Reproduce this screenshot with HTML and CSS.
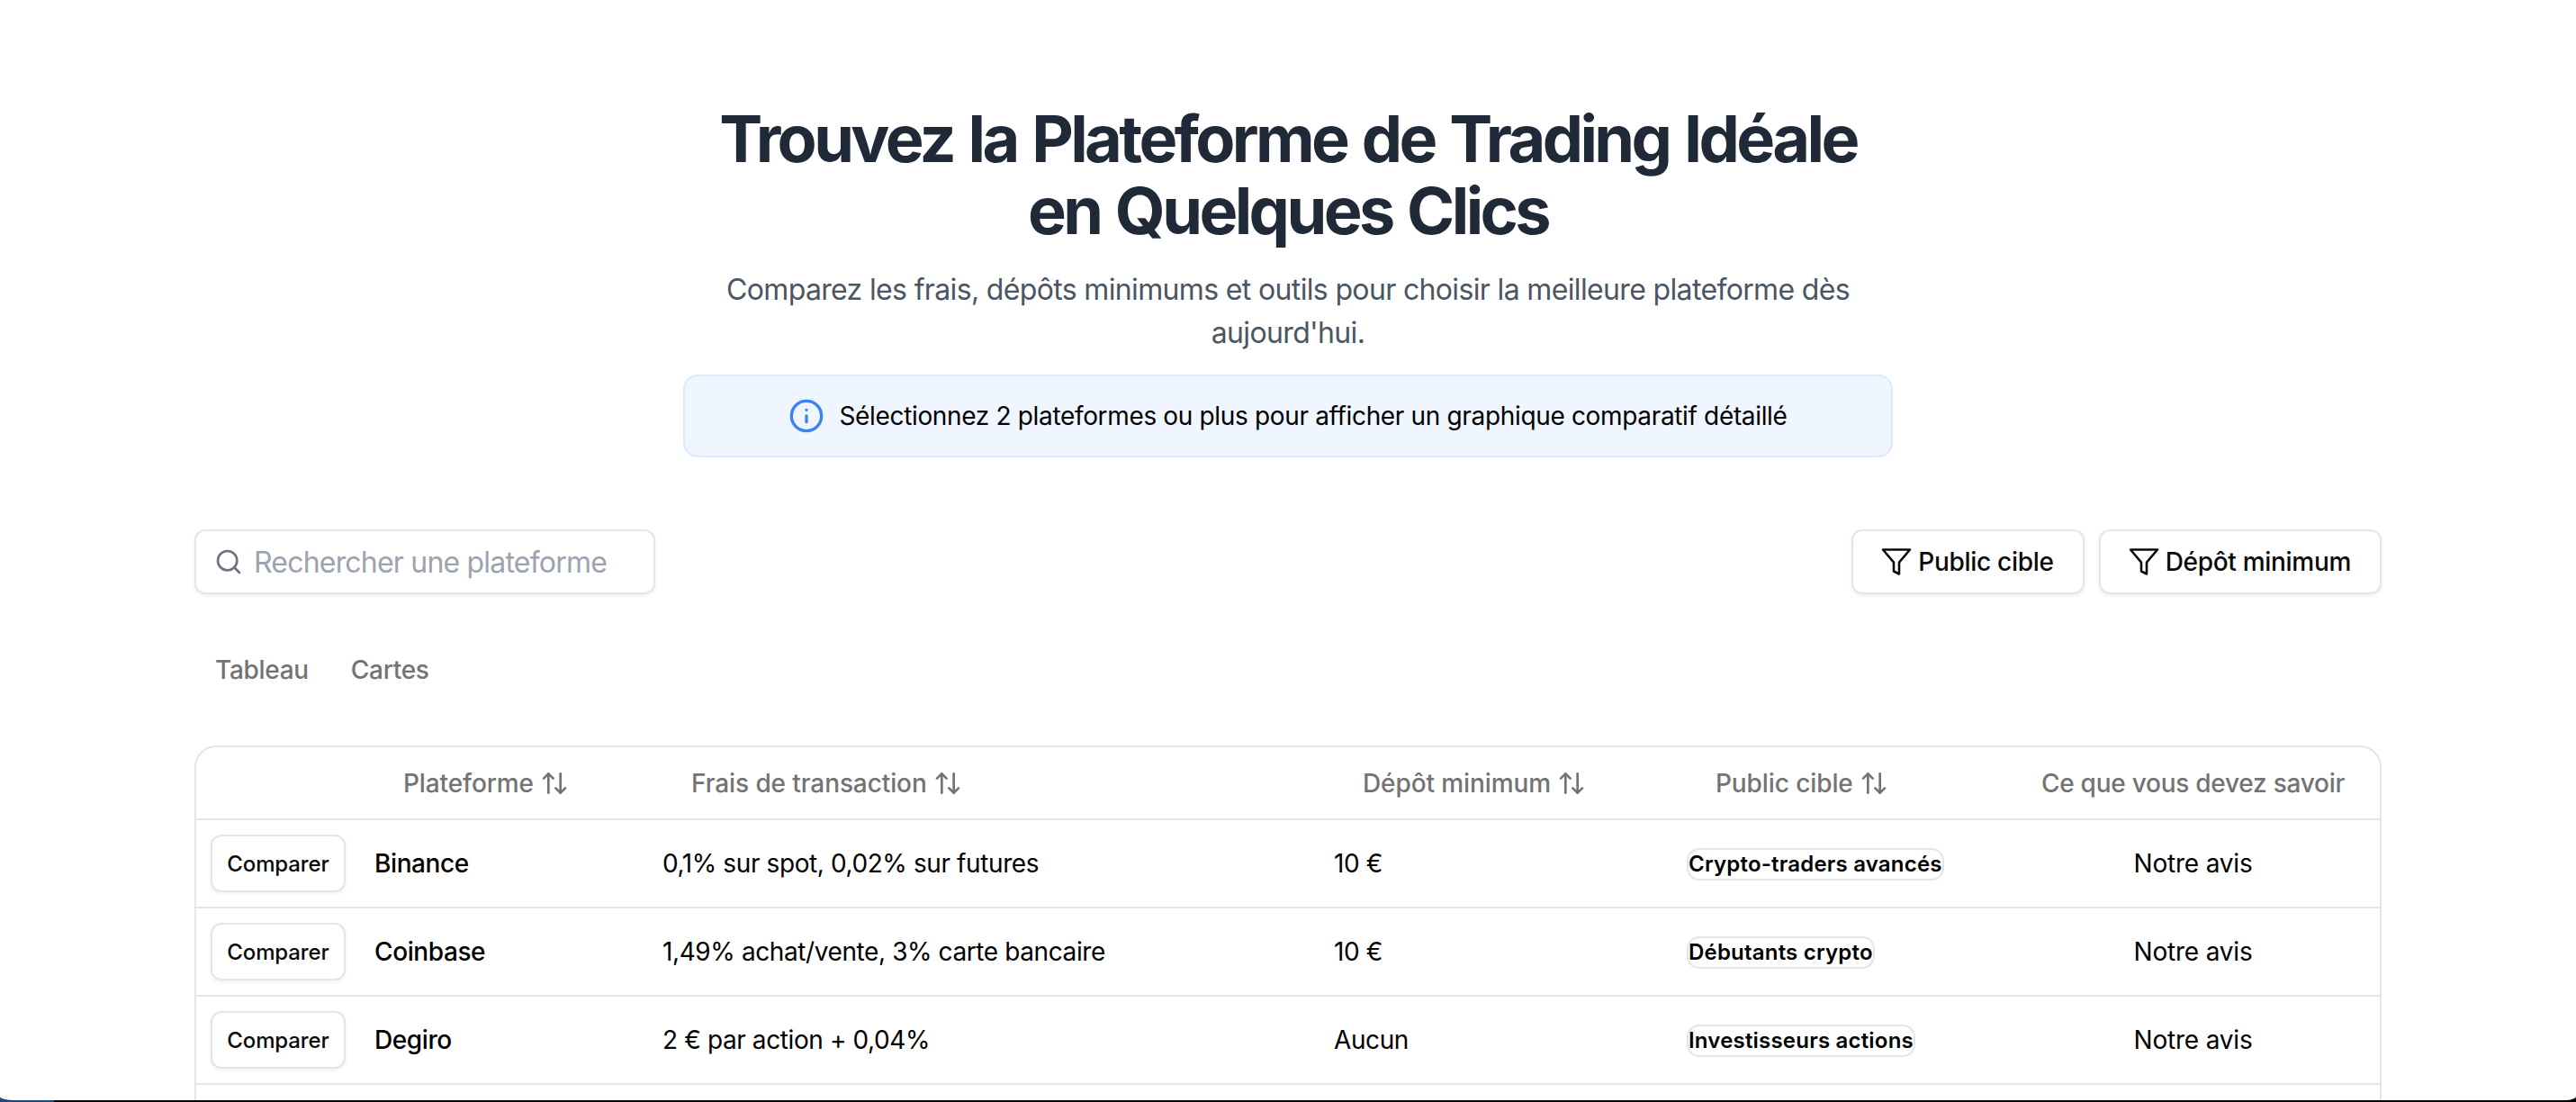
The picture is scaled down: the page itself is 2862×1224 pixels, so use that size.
FILE: index.html
```html
<!DOCTYPE html>
<html lang="fr">
<head>
<meta charset="utf-8">
<title>Plateformes de trading</title>
<link rel="stylesheet" href="styles.css">
</head>
<body>
<main class="page">
  <header class="hero">
    <h1 class="title">Trouvez la Plateforme de Trading Idéale<br>en Quelques Clics</h1>
    <p class="lead">Comparez les frais, dépôts minimums et outils pour choisir la meilleure plateforme dès aujourd'hui.</p>
    <div class="notice">
      <svg class="notice-icon" viewBox="0 0 24 24" fill="none" stroke="currentColor" stroke-width="2" stroke-linecap="round" stroke-linejoin="round"><circle cx="12" cy="12" r="10"/><path d="M12 16v-4"/><path d="M12 8h.01"/></svg>
      <span>Sélectionnez 2 plateformes ou plus pour afficher un graphique comparatif détaillé</span>
    </div>
  </header>

  <section class="toolbar">
    <label class="search">
      <svg class="search-icon" viewBox="0 0 24 24" fill="none" stroke="currentColor" stroke-width="2" stroke-linecap="round" stroke-linejoin="round"><circle cx="11" cy="11" r="8"/><path d="m21 21-4.3-4.3"/></svg>
      <input class="search-input" type="text" placeholder="Rechercher une plateforme">
    </label>
    <div class="filters">
      <button class="filter"><svg class="filter-icon" viewBox="0 0 24 24" fill="none" stroke="currentColor" stroke-width="1.7" stroke-linecap="round" stroke-linejoin="round"><polygon points="22 3 2 3 10 12.46 10 19 14 21 14 12.46 22 3"/></svg>Public cible</button>
      <button class="filter"><svg class="filter-icon" viewBox="0 0 24 24" fill="none" stroke="currentColor" stroke-width="1.7" stroke-linecap="round" stroke-linejoin="round"><polygon points="22 3 2 3 10 12.46 10 19 14 21 14 12.46 22 3"/></svg>Dépôt minimum</button>
    </div>
  </section>

  <nav class="tabs">
    <span class="tab">Tableau</span>
    <span class="tab">Cartes</span>
  </nav>

  <section class="table-wrap">
    <table class="table">
      <colgroup>
        <col class="c1"><col class="c2"><col class="c3"><col class="c4"><col class="c5"><col class="c6">
      </colgroup>
      <thead>
        <tr>
          <th></th>
          <th><span class="th-in">Plateforme <svg class="sort" viewBox="0 0 24 24" fill="none" stroke="currentColor" stroke-width="2" stroke-linecap="round" stroke-linejoin="round"><path d="m21 16-4 4-4-4"/><path d="M17 20V4"/><path d="m3 8 4-4 4 4"/><path d="M7 4v16"/></svg></span></th>
          <th><span class="th-in">Frais de transaction <svg class="sort" viewBox="0 0 24 24" fill="none" stroke="currentColor" stroke-width="2" stroke-linecap="round" stroke-linejoin="round"><path d="m21 16-4 4-4-4"/><path d="M17 20V4"/><path d="m3 8 4-4 4 4"/><path d="M7 4v16"/></svg></span></th>
          <th><span class="th-in">Dépôt minimum <svg class="sort" viewBox="0 0 24 24" fill="none" stroke="currentColor" stroke-width="2" stroke-linecap="round" stroke-linejoin="round"><path d="m21 16-4 4-4-4"/><path d="M17 20V4"/><path d="m3 8 4-4 4 4"/><path d="M7 4v16"/></svg></span></th>
          <th><span class="th-in">Public cible <svg class="sort" viewBox="0 0 24 24" fill="none" stroke="currentColor" stroke-width="2" stroke-linecap="round" stroke-linejoin="round"><path d="m21 16-4 4-4-4"/><path d="M17 20V4"/><path d="m3 8 4-4 4 4"/><path d="M7 4v16"/></svg></span></th>
          <th class="center">Ce que vous devez savoir</th>
        </tr>
      </thead>
      <tbody>
        <tr>
          <td><button class="compare">Comparer</button></td>
          <td class="name">Binance</td>
          <td>0,1% sur spot, 0,02% sur futures</td>
          <td>10 €</td>
          <td><span class="badge">Crypto-traders avancés</span></td>
          <td class="center">Notre avis</td>
        </tr>
        <tr>
          <td><button class="compare">Comparer</button></td>
          <td class="name">Coinbase</td>
          <td>1,49% achat/vente, 3% carte bancaire</td>
          <td>10 €</td>
          <td><span class="badge">Débutants crypto</span></td>
          <td class="center">Notre avis</td>
        </tr>
        <tr>
          <td><button class="compare">Comparer</button></td>
          <td class="name">Degiro</td>
          <td>2 € par action + 0,04%</td>
          <td>Aucun</td>
          <td><span class="badge">Investisseurs actions</span></td>
          <td class="center">Notre avis</td>
        </tr>
        <tr class="spacer"><td colspan="6"></td></tr>
      </tbody>
    </table>
  </section>
</main>
</body>
</html>
```

FILE: styles.css
```css
* { box-sizing: border-box; }
html, body { margin: 0; height: 100%; overflow: hidden; }
body { font-family: Inter, "Noto Sans", sans-serif; color: #000; height: 1224px; background: linear-gradient(to right, #1d4a7a 0, #1d4a7a 60px, #000 60px); }
.page { height: 1222px; overflow: hidden; padding: 0 216px; background: #fff; border-radius: 0 0 12px 16px / 0 0 4px 4px; }
.hero { display: flex; flex-direction: column; align-items: center; padding-top: 114px; }
.title { margin: 0; font-size: 72px; line-height: 80px; font-weight: 700; letter-spacing: -3.6px; word-spacing: 3px; color: #1f2937; text-align: center; }
.lead { margin: 24px 0 0; width: 1344px; font-size: 32px; line-height: 48px; letter-spacing: -.65px; color: #4b5563; text-align: center; }
.notice { margin-top: 22px; width: 1344px; height: 92px; display: flex; align-items: center; justify-content: center; gap: 16px; background: #eff6ff; border: 2px solid #dbeafe; border-radius: 16px; font-size: 28px; letter-spacing: -.34px; }
.notice-icon { width: 40px; height: 40px; color: #3b82f6; flex: none; }
.toolbar { margin-top: 80px; display: flex; justify-content: space-between; }
.search { width: 512px; height: 72px; display: flex; align-items: center; gap: 12px; padding: 0 20px; background: #fff; border: 2px solid #e5e5e5; border-radius: 12px; box-shadow: 0 2px 4px rgba(0,0,0,.06); }
.search-icon { width: 32px; height: 32px; color: #6b7280; flex: none; }
.search-input { flex: 1; min-width: 0; border: 0; outline: 0; padding: 0; background: transparent; font: 32px Inter, sans-serif; letter-spacing: -.8px; color: #000; }
.search-input::placeholder { color: #9ca3af; opacity: 1; }
.filters { display: flex; gap: 16px; }
.filter { height: 72px; display: flex; align-items: center; gap: 6px; padding: 0 32px 0 30px; background: #fff; border: 2px solid #e5e5e5; border-radius: 12px; box-shadow: 0 2px 4px rgba(0,0,0,.06); font: 500 28px Inter, sans-serif; letter-spacing: -.3px; color: #0a0a0a; }
.filter-icon { width: 36px; height: 36px; flex: none; }
.tabs { margin-top: 48px; display: flex; height: 72px; align-items: center; }
.tab { padding: 0 24px 0 23px; font-size: 28px; font-weight: 500; letter-spacing: -.3px; color: #737373; }
.table-wrap { margin-top: 48px; border: 2px solid #e5e5e5; border-radius: 24px; overflow: hidden; }
.table { width: 100%; border-collapse: collapse; table-layout: fixed; font-size: 28px; letter-spacing: -.4px; }
.c1 { width: 182px; } .c2 { width: 320px; } .c3 { width: 746px; } .c4 { width: 392px; } .c5 { width: 371px; } .c6 { width: 415px; }
th { height: 80px; padding: 0 16px; font-weight: 500; color: #737373; text-align: left; letter-spacing: -.1px; border-bottom: 2px solid #e5e5e5; }
.th-in { padding-left: 32px; }
td { height: 98px; padding: 0 16px; text-align: left; border-bottom: 2px solid #e5e5e5; }
th.center { text-align: center; letter-spacing: -.25px; }
td.center { text-align: center; letter-spacing: -.2px; }
.name { font-weight: 500; }
.sort { width: 32px; height: 32px; vertical-align: -6px; }
.compare { height: 64px; width: 150px; padding: 0; background: #fff; border: 2px solid #e5e5e5; border-radius: 12px; box-shadow: 0 2px 4px rgba(0,0,0,.06); font: 500 24px Inter, sans-serif; letter-spacing: -.1px; color: #0a0a0a; }
.badge { display: inline-block; border: 2px solid #e5e5e5; border-radius: 14px; font-size: 24px; font-weight: 600; line-height: 32px; letter-spacing: .2px; }
.spacer td { height: 60px; border: 0; }
```
